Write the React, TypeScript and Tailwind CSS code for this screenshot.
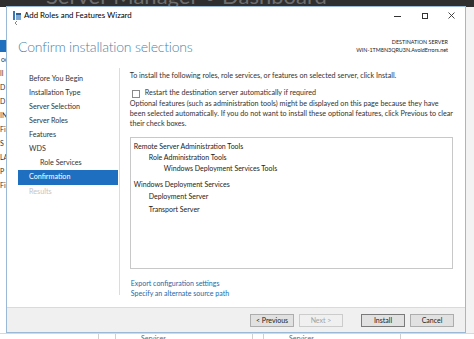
import React from "react";

const navItems: { label: string; indent?: boolean; active?: boolean; disabled?: boolean }[] = [
  { label: "Before You Begin" },
  { label: "Installation Type" },
  { label: "Server Selection" },
  { label: "Server Roles" },
  { label: "Features" },
  { label: "WDS" },
  { label: "Role Services", indent: true },
  { label: "Confirmation", active: true },
  { label: "Results", disabled: true },
];

function WizardIcon() {
  return (
    <svg width="10" height="16" viewBox="0 0 10 16">
      <rect x="1" y="1" width="2" height="9" fill="#3a78b8" />
      <rect x="4" y="3" width="5" height="7" fill="#7fa9d4" />
      <rect x="4" y="3" width="5" height="2" fill="#2c5f96" />
      <path d="M3 13 L5 11 M3 13 L5 15" stroke="#666" strokeWidth="0.8" fill="none" />
    </svg>
  );
}

export default function App() {
  return (
    <div className="relative w-[474px] h-[339px] overflow-hidden flex flex-col bg-[#f2f2f2] font-['Lato',sans-serif]">
      {/* background: server manager */}
      <div className="h-[7px] bg-[#2f2f2f] overflow-hidden pl-[46px]">
        <div className="-mt-[16px] text-[22px] leading-[24px] text-[#6e6e6e] whitespace-nowrap">
          Server Manager • Dashboard
        </div>
      </div>
      <div className="flex-1 flex">
        <div className="w-[7px] bg-white flex flex-col text-[7px] leading-[14px] text-[#333] overflow-hidden">
          <div className="h-[33px]" />
          <div className="h-[12px] bg-[#1f6fbf]" />
          <div className="pl-[1px]">oc</div>
          <div>ll</div>
          <div>D</div>
          <div>D</div>
          <div>IN</div>
          <div>Fi</div>
          <div>S</div>
          <div>LA</div>
          <div>P</div>
          <div>Fi</div>
        </div>
        <div className="flex-1 bg-[#f3f3f3]" />
      </div>
      <div className="h-[6px] bg-white flex text-[7px] leading-[8px] text-[#666] overflow-hidden border-t border-[#d8d8d8]">
        <div className="w-[98px]" />
        <div className="w-[17px] border-l border-[#cfcfcf]" />
        <div className="w-[137px] border-l border-[#cfcfcf] pl-[25px]">Services</div>
        <div className="w-[11px] border-l border-[#cfcfcf]" />
        <div className="w-[137px] border-l border-[#cfcfcf] pl-[25px]">Services</div>
        <div className="border-l border-[#cfcfcf] flex-1" />
      </div>

      {/* wizard window */}
      <div className="absolute left-[6px] top-[6px] w-[460px] h-[327px] border border-[#9ab9d6] bg-white flex flex-col">
        {/* title bar */}
        <div className="h-[17px] flex items-start">
          <div className="pl-[5px] pt-[3px]">
            <WizardIcon />
          </div>
          <div className="pl-[2px] h-[17px] flex items-center text-[7.9px] text-black whitespace-nowrap">
            Add Roles and Features Wizard
          </div>
          <div className="flex-1" />
          <div className="w-[27px] h-[17px] flex items-center justify-center">
            <div className="w-[7px] h-px bg-[#333] mt-[2px]" />
          </div>
          <div className="w-[27px] h-[17px] flex items-center justify-center">
            <div className="w-[6px] h-[6px] border border-[#333]" />
          </div>
          <div className="w-[27px] h-[17px] flex items-center justify-center">
            <svg width="7" height="7" viewBox="0 0 7 7">
              <path d="M0.5 0.5 L6.5 6.5 M6.5 0.5 L0.5 6.5" stroke="#333" strokeWidth="0.9" />
            </svg>
          </div>
        </div>

        {/* header */}
        <div className="h-[43px] flex justify-between items-start pl-[11px] pr-[17px] pt-[14px]">
          <div className="text-[14px] leading-[18px] font-light text-[#4b84a8] whitespace-nowrap tracking-[-0.2px]">
            Confirm installation selections
          </div>
          <div className="text-right text-[5.4px] leading-[8px] text-[#222] whitespace-nowrap">
            <div>DESTINATION SERVER</div>
            <div>WIN-1TM8N3QRU3N.AvoidErrors.net</div>
          </div>
        </div>

        {/* body */}
        <div className="flex-1 flex">
          <div className="w-[113px] pt-[5px] flex flex-col text-[7.2px] text-[#333]">
            {navItems.map((it) =>
              it.active ? (
                <div
                  key={it.label}
                  className="ml-[11px] w-[100px] h-[15px] bg-[#1f6fc1] text-white flex items-center pl-[11px] whitespace-nowrap"
                >
                  {it.label}
                </div>
              ) : (
                <div
                  key={it.label}
                  className={
                    "h-[14px] flex items-center whitespace-nowrap " +
                    (it.indent ? "pl-[33px] " : "pl-[22px] ") +
                    (it.disabled ? "text-[#c4c4c4]" : "")
                  }
                >
                  {it.label}
                </div>
              )
            )}
          </div>
          <div className="w-px bg-[#dcdcdc] mt-[1px] mb-[12px]" />
          <div className="flex-1 pl-[10px] pr-[12px] pt-[4px] flex flex-col text-[7.2px] text-[#333]">
            <div className="leading-[10px] whitespace-nowrap">
              To install the following roles, role services, or features on selected server, click Install.
            </div>
            <div className="mt-[7px] h-[11px] flex items-center">
              <div className="ml-[2px] w-[8px] h-[8px] border border-[#8a8a8a] bg-white" />
              <div className="ml-[5px] whitespace-nowrap">Restart the destination server automatically if required</div>
            </div>
            <div className="leading-[10px] whitespace-nowrap">
              <div>Optional features (such as administration tools) might be displayed on this page because they have</div>
              <div>been selected automatically. If you do not want to install these optional features, click Previous to clear</div>
              <div>their check boxes.</div>
            </div>
            <div className="mt-[8px] h-[132px] border border-[#c8c8c8] pl-[3px] pt-[3px] flex flex-col text-[7px] text-[#222]">
              <div className="leading-[11px]">Remote Server Administration Tools</div>
              <div className="leading-[11px] pl-[15px]">Role Administration Tools</div>
              <div className="leading-[11px] pl-[30px]">Windows Deployment Services Tools</div>
              <div className="leading-[11px] mt-[5px]">Windows Deployment Services</div>
              <div className="leading-[13px] pl-[15px]">Deployment Server</div>
              <div className="leading-[13px] pl-[15px]">Transport Server</div>
            </div>
            <div className="mt-[9px] pl-[1px] leading-[10px] text-[7px] text-[#2468a8]">
              <div>Export configuration settings</div>
              <div>Specify an alternate source path</div>
            </div>
          </div>
        </div>

        {/* footer */}
        <div className="h-[25px] border-t border-[#dadada] bg-[#f0f0f0] flex items-center justify-end pr-[11px] text-[7px]">
          <button className="w-[44px] h-[13px] border border-[#adadad] bg-[#e1e1e1] text-[#222] flex items-center justify-center">
            &lt; Previous
          </button>
          <button className="ml-[5px] w-[44px] h-[13px] border border-[#cccccc] bg-[#f0f0f0] text-[#a3a3a3] flex items-center justify-center">
            Next &gt;
          </button>
          <button className="ml-[18px] w-[44px] h-[13px] border border-[#7a7a7a] bg-[#e1e1e1] text-[#222] flex items-center justify-center">
            Install
          </button>
          <button className="ml-[5px] w-[44px] h-[13px] border border-[#adadad] bg-[#e1e1e1] text-[#222] flex items-center justify-center">
            Cancel
          </button>
        </div>
      </div>
    </div>
  );
}
